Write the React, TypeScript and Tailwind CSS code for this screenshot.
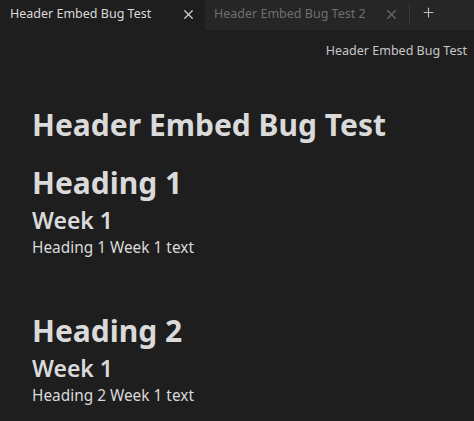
import { X, Plus } from 'lucide-react';

const FONT = '"Noto Sans", "Open Sans", sans-serif';

export default function App() {
  return (
    <div className="w-[474px] h-[421px] bg-[#1e1e1e] flex flex-col overflow-hidden text-[#dadada]" style={{ fontFamily: FONT }}>
      <div className="h-[30px] bg-[#262626] flex items-stretch shrink-0">
        <div className="w-[205px] bg-[#1e1e1e] flex items-center justify-between pl-[10px] pr-[9px] pb-[2px]">
          <span className="text-[12.5px] text-[#dadada] whitespace-nowrap">Header Embed Bug Test</span>
          <X className="w-[15px] h-[15px] text-[#cfcfcf]" strokeWidth={2} />
        </div>
        <div className="w-[204px] flex items-center justify-between pl-[9px] pr-[10px] pb-[2px] rounded-bl-[6px] bg-[#262626]">
          <span className="text-[12.5px] text-[#6f6f6f] whitespace-nowrap overflow-hidden">Header Embed Bug Test 2</span>
          <X className="w-[15px] h-[15px] text-[#6a6a6a] shrink-0" strokeWidth={2} />
        </div>
        <div className="w-px bg-[#3a3a3a] my-[4px] h-[20px]" />
        <div className="flex items-center pl-[11px] pb-[6px]">
          <Plus className="w-[15px] h-[15px] text-[#bdbdbd]" strokeWidth={1.75} />
        </div>
      </div>

      <div className="flex justify-end pr-[7px] pt-[12px]">
        <span className="text-[12.5px] leading-[18px] text-[#c8c8c8]">Header Embed Bug Test</span>
      </div>

      <div className="px-[32px] pt-[44px]">
        <h1 className="text-[30px] font-bold leading-[42px] text-[#dadada]">Header Embed Bug Test</h1>

        <div className="mt-[16px]">
          <h2 className="text-[30px] font-bold leading-[42px]">Heading 1</h2>
          <h3 className="text-[23px] font-semibold leading-[32px]">Week 1</h3>
          <p className="text-[15.4px] leading-[23px]">Heading 1 Week 1 text</p>
        </div>

        <div className="mt-[51px]">
          <h2 className="text-[30px] font-bold leading-[42px]">Heading 2</h2>
          <h3 className="text-[23px] font-semibold leading-[32px]">Week 1</h3>
          <p className="text-[15.4px] leading-[23px]">Heading 2 Week 1 text</p>
        </div>
      </div>
    </div>
  );
}
